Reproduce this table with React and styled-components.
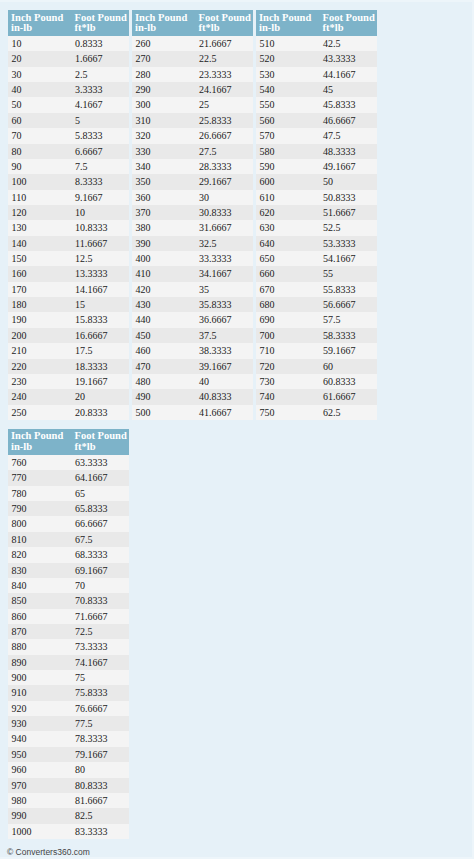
import React from "react";
import styled, { createGlobalStyle } from "styled-components";

const GlobalStyle = createGlobalStyle`
	html, body {
		margin: 0;
		padding: 0;
		background: #e6f1f8;
	}
`;

const Page = styled.div`
	box-sizing: border-box;
	width: 474px;
	height: 859px;
	padding: 8px 8px 0 8px;
	background: #e6f1f8;
	border-top: 2px solid #edf5fa;
	border-right: 2px solid #edf5fa;
	border-bottom: 2px solid #edf5fa;
	overflow: hidden;
`;

const Tables = styled.div`
	display: flex;
	flex-wrap: wrap;
	column-gap: 3.5px;
	row-gap: 9px;
	width: 380px;
`;

const Table = styled.table`
	width: 120.5px;
	border-collapse: collapse;
	font-family: "Liberation Serif", "DejaVu Serif", serif;
	table-layout: fixed;
`;

const HeadCell = styled.th`
	height: 26px;
	padding: 2px 0 2px 3px;
	box-sizing: border-box;
	background: #7db3c9;
	color: #ffffff;
	font-size: 10.5px;
	font-weight: bold;
	line-height: 10.5px;
	text-align: left;
	vertical-align: middle;
	width: ${(p) => p.$w}px;
	white-space: nowrap;
	overflow: hidden;
`;

const Row = styled.tr`
	height: 15.36px;
	background: ${(p) => (p.$odd ? "#e9e9e9" : "#f4f4f4")};
`;

const Cell = styled.td`
	padding: 0 0 0 3.5px;
	font-size: 10px;
	line-height: 15.36px;
	color: #222222;
	white-space: nowrap;
`;

const Copyright = styled.div`
	margin-top: 8px;
	margin-left: -1px;
	font-family: "Liberation Sans", Arial, sans-serif;
	font-size: 8.5px;
	color: #444444;
`;

const fmt = (n) => String(parseFloat((n / 12).toFixed(4)));

const blocks = [0, 1, 2, 3].map((b) =>
	Array.from({ length: 25 }, (_, i) => (b * 25 + i + 1) * 10)
);

const ConvTable = ({ values }) => (
	<Table>
		<thead>
			<tr>
				<HeadCell $w={63.5}>
					Inch Pound
					<br />
					in-lb
				</HeadCell>
				<HeadCell $w={57}>
					Foot Pound
					<br />
					ft*lb
				</HeadCell>
			</tr>
		</thead>
		<tbody>
			{values.map((v, i) => (
				<Row key={v} $odd={i % 2 === 1}>
					<Cell>{v}</Cell>
					<Cell>{fmt(v)}</Cell>
				</Row>
			))}
		</tbody>
	</Table>
);

const App = () => {
	return (
		<Page>
			<GlobalStyle />
			<Tables>
				{blocks.map((values) => (
					<ConvTable key={values[0]} values={values} />
				))}
			</Tables>
			<Copyright>© Converters360.com</Copyright>
		</Page>
	);
};

export default App;
